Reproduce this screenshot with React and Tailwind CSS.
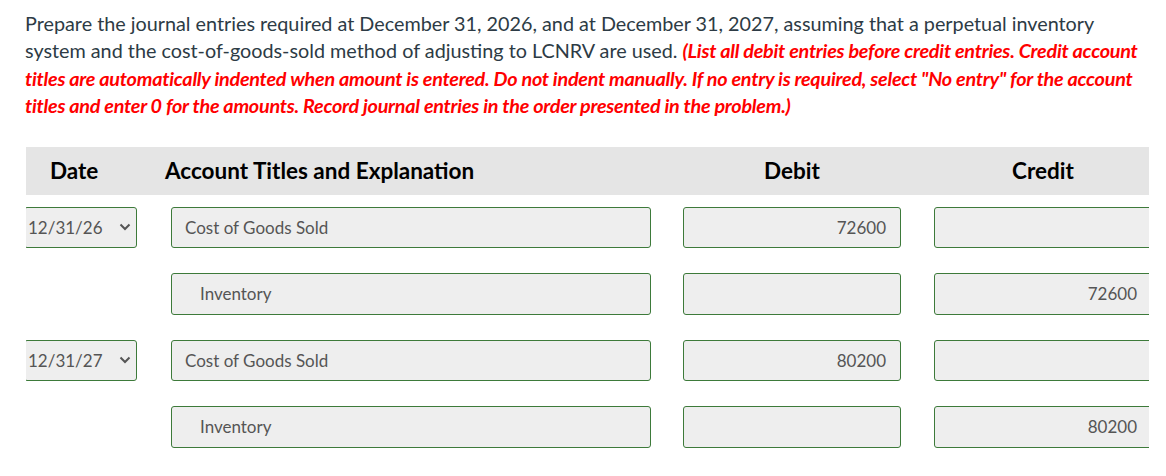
import React from "react";

const rows = [
  { date: "12/31/26", account: "Cost of Goods Sold", debit: "72600", credit: "", indent: false },
  { date: "", account: "Inventory", debit: "", credit: "72600", indent: true },
  { date: "12/31/27", account: "Cost of Goods Sold", debit: "80200", credit: "", indent: false },
  { date: "", account: "Inventory", debit: "", credit: "80200", indent: true },
];

function Chevron() {
  return (
    <svg width="12" height="8" viewBox="0 0 12 8" className="shrink-0">
      <path d="M1.5 1.5 L6 6 L10.5 1.5" fill="none" stroke="#555" strokeWidth="2" />
    </svg>
  );
}

function Field({ value, right, indent, className }) {
  return (
    <div
      className={`h-full flex items-center rounded-[3px] border border-[#3d7a3a] bg-[#eeeeee] text-[17px] text-[#555] ${
        right ? "justify-end pr-[14px]" : indent ? "pl-[28px]" : "pl-[13px]"
      } ${className || ""}`}
    >
      {value}
    </div>
  );
}

export default function App() {
  return (
    <div className="bg-white w-[1166px] h-[476px] overflow-hidden" style={{ fontFamily: "Lato, 'Open Sans', sans-serif" }}>
      <p className="pl-[25px] pt-[10px] text-[19.8px] leading-[27.4px] text-[#2d3b45] whitespace-nowrap">
        Prepare the journal entries required at December 31, 2026, and at December 31, 2027, assuming that a perpetual inventory
        <br />
        system and the cost-of-goods-sold method of adjusting to LCNRV are used.{" "}
        <span className="font-bold italic text-[#ff0000] tracking-[-0.25px]">
          (List all debit entries before credit entries. Credit account
          <br />
          titles are automatically indented when amount is entered. Do not indent manually. If no entry is required, select "No entry" for the account
          <br />
          titles and enter 0 for the amounts. Record journal entries in the order presented in the problem.)
        </span>
      </p>

      <div className="ml-[26px] mt-[27px] w-[1123px] overflow-hidden">
        <div className="-ml-[2px] w-[1130px]">
          {/* header */}
          <div className="flex h-[48px] items-center bg-[#e5e5e5] text-[22.5px] font-bold text-black">
            <div className="w-[141px] pl-[26px]">Date</div>
            <div className="w-[518px]">Account Titles and Explanation</div>
            <div className="w-[218px] text-center">Debit</div>
            <div className="w-[33px]" />
            <div className="w-[218px] text-center">Credit</div>
          </div>

          {/* entries */}
          <div className="mt-[12px] flex flex-col gap-[25px]">
            {rows.map((r, i) => (
              <div key={i} className="flex h-[41.5px]">
                <div className="w-[147px] h-full">
                  {r.date && (
                    <div className="w-[113px] h-full flex items-center justify-between pl-[3px] pr-[5px] rounded-[3px] border border-[#3d7a3a] bg-[#eeeeee] text-[17px] text-[#555]">
                      <span>{r.date}</span>
                      <Chevron />
                    </div>
                  )}
                </div>
                <Field value={r.account} indent={r.indent} className="w-[480px]" />
                <div className="w-[32px]" />
                <Field value={r.debit} right className="w-[218px]" />
                <div className="w-[33px]" />
                <Field value={r.credit} right className="w-[218px]" />
              </div>
            ))}
          </div>
        </div>
      </div>
    </div>
  );
}
